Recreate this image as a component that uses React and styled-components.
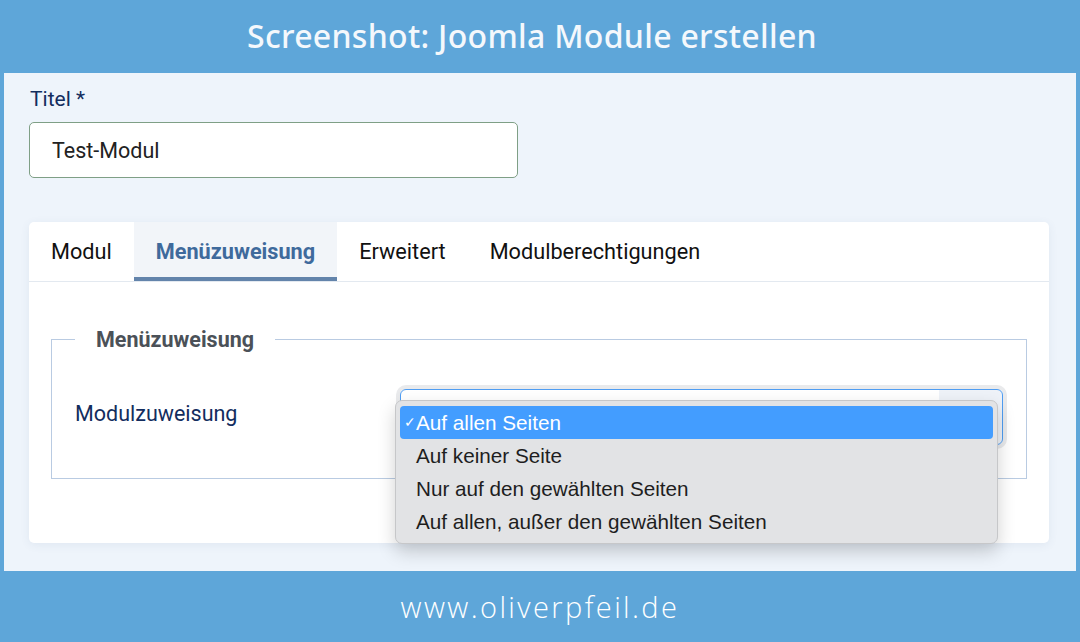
import React from "react";
import styled, { createGlobalStyle } from "styled-components";

const Global = createGlobalStyle`
  html, body { margin: 0; padding: 0; }
  body { font-family: Roboto, "Liberation Sans", sans-serif; }
  * { box-sizing: border-box; }
`;

const Frame = styled.div`
  width: 1080px;
  height: 642px;
  background: #5ea6d9;
  display: flex;
  flex-direction: column;
  overflow: hidden;
`;

const Header = styled.header`
  height: 73px;
  display: flex;
  align-items: center;
  justify-content: center;
  color: #f4f8fc;
  font-family: "Noto Sans", sans-serif;
  font-weight: 500;
  font-size: 32px;
  letter-spacing: 0.3px;
  padding: 0 16px 2px 0;
`;

const Main = styled.main`
  flex: 1;
  margin: 0 4px;
  background: #eef4fb;
  padding: 13px 27px 28px 25px;
  display: flex;
  flex-direction: column;
`;

const Label = styled.label`
  color: #132d5e;
  font-size: 21px;
  line-height: 26px;
  padding-left: 1px;
`;

const TextInput = styled.div`
  margin-top: 10px;
  width: 489px;
  height: 56px;
  background: #fff;
  border: 1px solid #7f9f86;
  border-radius: 5px;
  display: flex;
  align-items: center;
  padding-left: 22px;
  font-size: 21.5px;
  color: #222;
`;

const Card = styled.section`
  margin-top: 44px;
  flex: 1;
  background: #fff;
  border-radius: 5px;
  box-shadow: 0 2px 10px rgba(60, 90, 130, 0.08);
  display: flex;
  flex-direction: column;
`;

const TabBar = styled.nav`
  height: 60px;
  display: flex;
  border-bottom: 1px solid #e3e9f0;
`;

const Tab = styled.div`
  padding: 0 22px;
  display: flex;
  align-items: center;
  font-size: 21.7px;
  color: ${(p) => (p.$active ? "#3f6a9c" : "#111")};
  font-weight: ${(p) => (p.$active ? 700 : 400)};
  background: ${(p) => (p.$active ? "#f2f5f9" : "transparent")};
  border-bottom: 4px solid ${(p) => (p.$active ? "#6384ab" : "transparent")};
  padding-top: 4px;
`;

const TabBody = styled.div`
  padding: 45px 22px 0;
`;

const Fieldset = styled.fieldset`
  margin: 0;
  border: 1px solid #b9cbe2;
  padding: 37px 23px 33px 23px;
  min-width: 0;
`;

const Legend = styled.legend`
  margin-left: 0;
  padding: 0 21px;
  font-size: 21.5px;
  font-weight: 700;
  color: #4b5158;
`;

const Row = styled.div`
  display: flex;
  align-items: center;
`;

const RowLabel = styled.div`
  width: 325px;
  flex-shrink: 0;
  color: #132d5e;
  font-size: 21.5px;
  padding-bottom: 8px;
`;

const SelectWrap = styled.div`
  position: relative;
  flex: 1;
  height: 56px;
`;

const SelectBox = styled.div`
  height: 56px;
  border: 1px solid #4f9df2;
  border-radius: 6px;
  background: linear-gradient(to right, #fff 0, #fff 89.5%, #eef2f8 89.5%);
  box-shadow: 0 0 0 4px #e9eaec;
`;

const Dropdown = styled.ul`
  position: absolute;
  left: -5px;
  top: 11px;
  width: 603px;
  margin: 0;
  padding: 5px 4px;
  list-style: none;
  background: #e2e3e5;
  border: 1px solid #c6c7c9;
  border-radius: 7px;
  box-shadow: 0 8px 18px rgba(0, 0, 0, 0.18);
  font-family: "Liberation Sans", Arial, sans-serif;
`;

const Option = styled.li`
  position: relative;
  height: 33px;
  display: flex;
  align-items: center;
  padding-left: 16px;
  border-radius: 4px;
  font-size: 20.7px;
  color: ${(p) => (p.$selected ? "#fff" : "#1e1e1e")};
  background: ${(p) => (p.$selected ? "#439dff" : "transparent")};
`;

const Check = styled.span`
  position: absolute;
  left: 4px;
  top: 8px;
  font-size: 14px;
  color: #fff;
`;

const Footer = styled.footer`
  height: 71px;
  display: flex;
  align-items: center;
  justify-content: center;
  color: #fff;
  font-family: "Open Sans", sans-serif;
  font-weight: 300;
  font-size: 29px;
  letter-spacing: 2.4px;
  padding-bottom: 1px;
`;

const options = [
  "Auf allen Seiten",
  "Auf keiner Seite",
  "Nur auf den gewählten Seiten",
  "Auf allen, außer den gewählten Seiten",
];

const tabs = ["Modul", "Menüzuweisung", "Erweitert", "Modulberechtigungen"];

export default function App() {
  return (
    <>
      <Global />
      <Frame>
        <Header>Screenshot: Joomla Module erstellen</Header>
        <Main>
          <Label>Titel *</Label>
          <TextInput>Test-Modul</TextInput>
          <Card>
            <TabBar>
              {tabs.map((t) => (
                <Tab key={t} $active={t === "Menüzuweisung"}>
                  {t}
                </Tab>
              ))}
            </TabBar>
            <TabBody>
              <Fieldset>
                <Legend>Menüzuweisung</Legend>
                <Row>
                  <RowLabel>Modulzuweisung</RowLabel>
                  <SelectWrap>
                    <SelectBox />
                    <Dropdown>
                      {options.map((o, i) => (
                        <Option key={o} $selected={i === 0}>
                          {i === 0 && <Check>✓</Check>}
                          {o}
                        </Option>
                      ))}
                    </Dropdown>
                  </SelectWrap>
                </Row>
              </Fieldset>
            </TabBody>
          </Card>
        </Main>
        <Footer>www.oliverpfeil.de</Footer>
      </Frame>
    </>
  );
}
